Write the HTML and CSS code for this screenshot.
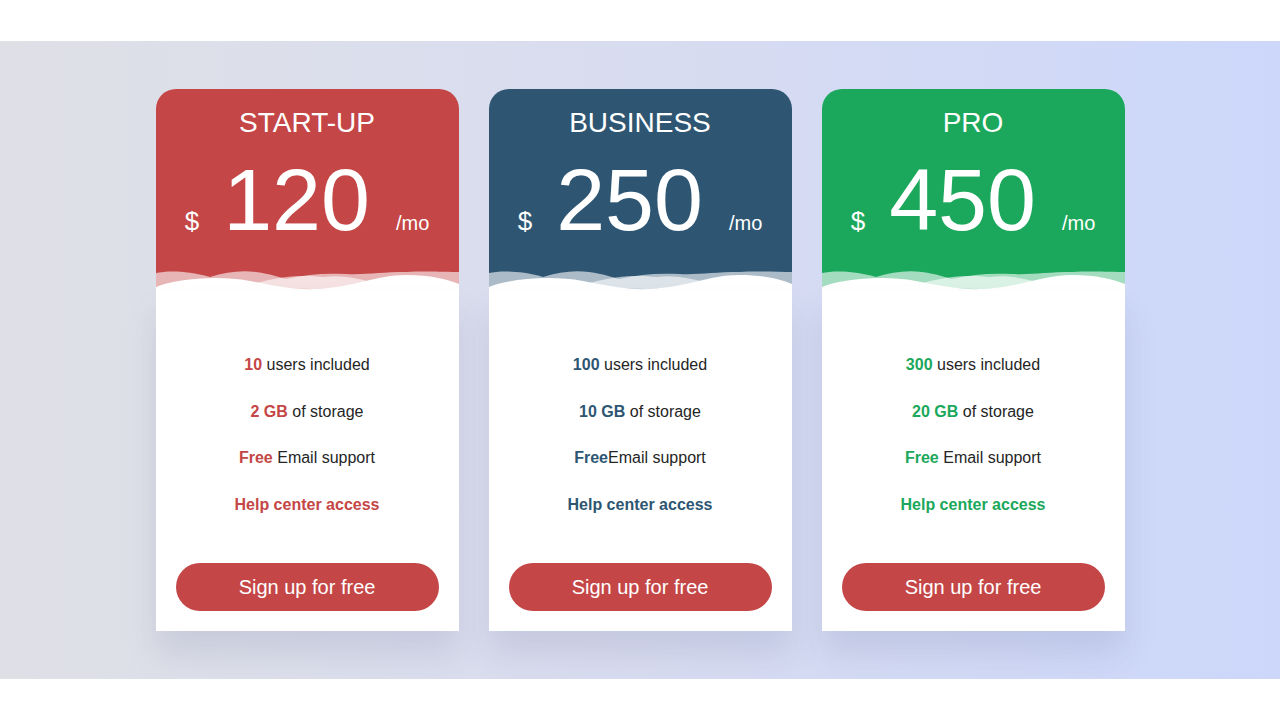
FILE: index.html
```html
<!DOCTYPE html>
<html lang="en">
<head>
<meta charset="utf-8">
<title>Pricing</title>
<link rel="stylesheet" href="styles.css">
</head>
<body>
<section class="pricing">
  <div class="card card-red">
    <div class="card-head">
      <h2 class="plan">START-UP</h2>
      <div class="price"><span class="cur">$</span><span class="amount">120</span><span class="per">/mo</span></div>
      <svg class="wave" viewBox="0 0 303 22" preserveAspectRatio="none">
        <path fill="#fff" fill-opacity="0.6" d="M0,4 C10,2 30,1 54,8 C70,3 85,1 100,3 C115,5 122,8 130,10 C150,5 170,4 190,5 C210,6 225,3 250,3 C270,2 290,3 303,3 V22 H0 Z"/>
        <path fill="#fff" fill-opacity="0.6" d="M100,14 C130,6 150,6 168,8 C185,6 200,9 215,13 C190,22 130,22 100,14 Z"/>
        <path fill="#fff" d="M0,18 C20,10 60,6 94,12 C120,17 140,21 160,20 C200,18 220,6 250,6 C275,6 290,10 303,15 V22 H0 Z"/>
      </svg>
    </div>
    <div class="card-body">
      <ul class="features">
        <li><b>10</b> users included</li>
        <li><b>2 GB</b> of storage</li>
        <li><b>Free</b> Email support</li>
        <li><b>Help center access</b></li>
      </ul>
      <button class="signup">Sign up for free</button>
    </div>
  </div>
  <div class="card card-blue">
    <div class="card-head">
      <h2 class="plan">BUSINESS</h2>
      <div class="price"><span class="cur">$</span><span class="amount">250</span><span class="per">/mo</span></div>
      <svg class="wave" viewBox="0 0 303 22" preserveAspectRatio="none">
        <path fill="#fff" fill-opacity="0.6" d="M0,4 C10,2 30,1 54,8 C70,3 85,1 100,3 C115,5 122,8 130,10 C150,5 170,4 190,5 C210,6 225,3 250,3 C270,2 290,3 303,3 V22 H0 Z"/>
        <path fill="#fff" fill-opacity="0.6" d="M100,14 C130,6 150,6 168,8 C185,6 200,9 215,13 C190,22 130,22 100,14 Z"/>
        <path fill="#fff" d="M0,18 C20,10 60,6 94,12 C120,17 140,21 160,20 C200,18 220,6 250,6 C275,6 290,10 303,15 V22 H0 Z"/>
      </svg>
    </div>
    <div class="card-body">
      <ul class="features">
        <li><b>100</b> users included</li>
        <li><b>10 GB</b> of storage</li>
        <li><b>Free</b>Email support</li>
        <li><b>Help center access</b></li>
      </ul>
      <button class="signup">Sign up for free</button>
    </div>
  </div>
  <div class="card card-green">
    <div class="card-head">
      <h2 class="plan">PRO</h2>
      <div class="price"><span class="cur">$</span><span class="amount">450</span><span class="per">/mo</span></div>
      <svg class="wave" viewBox="0 0 303 22" preserveAspectRatio="none">
        <path fill="#fff" fill-opacity="0.6" d="M0,4 C10,2 30,1 54,8 C70,3 85,1 100,3 C115,5 122,8 130,10 C150,5 170,4 190,5 C210,6 225,3 250,3 C270,2 290,3 303,3 V22 H0 Z"/>
        <path fill="#fff" fill-opacity="0.6" d="M100,14 C130,6 150,6 168,8 C185,6 200,9 215,13 C190,22 130,22 100,14 Z"/>
        <path fill="#fff" d="M0,18 C20,10 60,6 94,12 C120,17 140,21 160,20 C200,18 220,6 250,6 C275,6 290,10 303,15 V22 H0 Z"/>
      </svg>
    </div>
    <div class="card-body">
      <ul class="features">
        <li><b>300</b> users included</li>
        <li><b>20 GB</b> of storage</li>
        <li><b>Free</b> Email support</li>
        <li><b>Help center access</b></li>
      </ul>
      <button class="signup">Sign up for free</button>
    </div>
  </div>
</section>
</body>
</html>
```

FILE: styles.css
```css
* { box-sizing: border-box; }

html, body {
  margin: 0;
  padding: 0;
  background: #fff;
  font-family: "Liberation Sans", Arial, sans-serif;
}

.pricing {
  margin-top: 41px;
  height: 638px;
  padding-top: 48px;
  display: flex;
  justify-content: center;
  align-items: flex-start;
  gap: 30px;
  background: linear-gradient(to right, #dfe0e6 0%, #d8dcf0 50%, #ccd7fa 100%);
}

.card {
  width: 303px;
  display: flex;
  flex-direction: column;
  border-radius: 20px 20px 0 0;
}

.card-red { --c: #c44646; }
.card-blue { --c: #2e5673; }
.card-green { --c: #1ba85c; }

.card-head {
  background: var(--c);
  color: #fff;
  border-radius: 20px 20px 0 0;
  padding-top: 19px;
  display: flex;
  flex-direction: column;
  align-items: center;
}

.plan {
  margin: 0;
  font-weight: normal;
  font-size: 28px;
  line-height: 30px;
  text-align: center;
}

.price {
  margin-top: 18px;
  display: flex;
  align-items: baseline;
  justify-content: center;
  line-height: 1;
  height: 90px;
}

.cur {
  font-size: 26px;
}

.amount {
  font-size: 88px;
  margin: 0 26px 0 24px;
}

.per {
  font-size: 20px;
}

.wave {
  display: block;
  width: 100%;
  height: 22px;
  margin-top: 23px;
}

.card-body {
  background: #fff;
  padding: 51px 20px 20px;
  box-shadow: 0 22px 30px rgba(70, 80, 120, 0.13);
}

.features {
  list-style: none;
  margin: 0;
  padding: 0;
  text-align: center;
  font-size: 16px;
  color: #252525;
}

.features li {
  line-height: 20px;
  padding: 13.25px 0;
}

.features b {
  color: var(--c);
}

.signup {
  display: block;
  width: 100%;
  height: 48px;
  margin-top: 35px;
  border: none;
  border-radius: 24px;
  background: #c44646;
  color: #fff;
  font-family: "Liberation Sans", Arial, sans-serif;
  font-size: 20px;
  cursor: pointer;
}
```
